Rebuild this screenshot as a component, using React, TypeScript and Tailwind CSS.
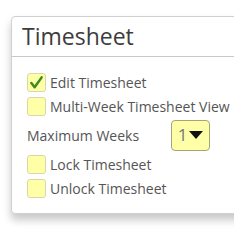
import React from "react";

const Box = ({ checked }: { checked?: boolean }) => (
  <span className="flex h-[19px] w-[19px] shrink-0 items-center justify-center rounded-[3px] border border-[#d9d6a8] bg-[#ffffa8]">
    {checked && (
      <svg width="15" height="15" viewBox="0 0 16 16">
        <path d="M2.5 8.5 L6 13 L13.5 2.5" fill="none" stroke="#3a8a1e" strokeWidth="2.6" strokeLinecap="round" strokeLinejoin="round" />
      </svg>
    )}
  </span>
);

export default function App() {
  return (
    <div className="h-[234px] w-[234px] overflow-hidden bg-white pl-[11px] pt-[16px]" style={{ fontFamily: '"Open Sans", sans-serif' }}>
      <div className="h-[198px] w-[260px] rounded-[4px] border border-[#d0d0d0] bg-white shadow-[0_6px_9px_rgba(0,0,0,0.22)]">
        <div className="h-[40px] border-b border-[#c8c8c8] pl-[10px] pt-[4px] text-[23px] leading-[30px] text-[#3d3d3d]">Timesheet</div>
        <div className="flex flex-col pl-[15px] pt-[13px] text-[14px] text-[#555555]">
          <div className="flex h-[24px] items-center gap-[4px]"><Box checked />Edit Timesheet</div>
          <div className="flex h-[24px] items-center gap-[4px]"><Box />Multi-Week Timesheet View</div>
          <div className="flex h-[34px] items-center">
            <span className="w-[144px]">Maximum Weeks</span>
            <span className="flex h-[31px] w-[39px] items-center justify-center gap-[2px] rounded-[4px] border border-[#a8a478] bg-[#ffffa8] text-[17px] text-[#777]">
              1
              <svg width="14" height="9" viewBox="0 0 14 9"><path d="M0 0 H14 L7 8 Z" fill="#111" /></svg>
            </span>
          </div>
          <div className="flex h-[24px] items-center gap-[4px]"><Box />Lock Timesheet</div>
          <div className="flex h-[24px] items-center gap-[4px]"><Box />Unlock Timesheet</div>
        </div>
      </div>
    </div>
  );
}
